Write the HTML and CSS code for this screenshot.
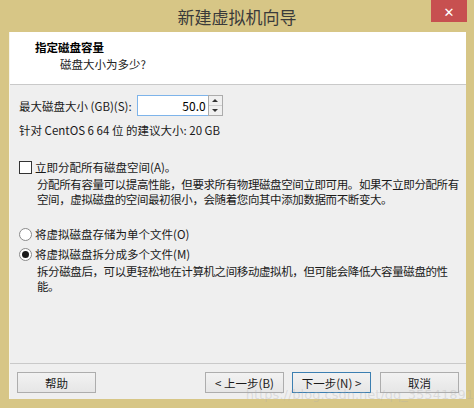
FILE: index.html
```html
<!DOCTYPE html>
<html lang="zh-CN">

<head>
    <meta charset="UTF-8">
    <meta name="viewport" content="width=device-width, initial-scale=1.0">
    <title>新建虚拟机向导</title>
    <link rel="stylesheet" href="styles.css">
</head>

<body>
    <div class="window">
        <div class="titlebar">
            <span class="title">新建虚拟机向导</span>
            <div class="close">&#x2715;</div>
        </div>

        <div class="client">
            <div class="header">
                <strong>指定磁盘容量</strong>
                <div class="subtitle">磁盘大小为多少?</div>
            </div>

            <div class="content">
                <div class="size-row">
                    <label for="disk-size">最大磁盘大小 (GB)(S):</label>
                    <div class="spin">
                        <input id="disk-size" type="text" value="50.0">
                        <div class="spin-buttons">
                            <span class="arrow up"></span>
                            <span class="arrow down"></span>
                        </div>
                    </div>
                </div>
                <div class="hint">针对 CentOS 6 64 位 的建议大小: 20 GB</div>

                <div class="option check-option">
                    <span class="checkbox"></span>
                    <span>立即分配所有磁盘空间(A)。</span>
                </div>
                <p class="note">分配所有容量可以提高性能，但要求所有物理磁盘空间立即可用。如果不立即分配所有<br>空间，虚拟磁盘的空间最初很小，会随着您向其中添加数据而不断变大。</p>

                <div class="option radio-first">
                    <span class="radio"></span>
                    <span>将虚拟磁盘存储为单个文件(O)</span>
                </div>
                <div class="option radio-second">
                    <span class="radio checked"></span>
                    <span>将虚拟磁盘拆分成多个文件(M)</span>
                </div>
                <p class="note">拆分磁盘后，可以更轻松地在计算机之间移动虚拟机，但可能会降低大容量磁盘的性<br>能。</p>
            </div>

            <div class="footer">
                <button class="btn">帮助</button>
                <div class="spacer"></div>
                <button class="btn">&lt; 上一步(B)</button>
                <button class="btn default">下一步(N) &gt;</button>
                <button class="btn">取消</button>
            </div>
        </div>

        <div class="watermark">https://blog.csdn.net/qq_35541891</div>
    </div>
</body>

</html>
```

FILE: styles.css
```css
* {
    box-sizing: border-box;
}

body {
    margin: 0;
    font-family: "Noto Sans CJK SC", "DejaVu Sans", sans-serif;
    font-size: 11.5px;
    color: #1a1a1a;
}

.window {
    position: relative;
    width: 474px;
    height: 408px;
    background: #d7c686;
    display: flex;
    flex-direction: column;
    overflow: hidden;
}

.titlebar {
    height: 32px;
    display: flex;
    align-items: center;
    justify-content: center;
}

.title {
    font-size: 17px;
    color: #3a3a3a;
    padding-top: 1px;
}

.close {
    position: absolute;
    top: 0;
    right: 7px;
    width: 36px;
    height: 22px;
    background: #c75050;
    color: #fff;
    font-size: 13px;
    font-weight: bold;
    display: flex;
    align-items: center;
    justify-content: center;
}

.client {
    flex: 1;
    margin: 0 8px 9px 9px;
    background: #efefef;
    border-left: 1px solid #f7f5ec;
    display: flex;
    flex-direction: column;
}

.header {
    height: 53px;
    background: #fff;
    border-bottom: 1px solid #c9c9c9;
    padding: 7px 0 0 25px;
    line-height: 17px;
}

.header strong {
    color: #000;
}

.subtitle {
    padding-left: 25px;
    color: #222;
}

.content {
    flex: 1;
    padding: 10px 0 0 9px;
}

.size-row {
    display: flex;
    align-items: center;
    height: 21px;
    gap: 5px;
}

.spin {
    display: flex;
    height: 21px;
}

.spin input {
    width: 71px;
    height: 21px;
    border: 1px solid #7eb4ea;
    border-right: none;
    font: inherit;
    font-size: 12px;
    text-align: right;
    padding: 0 2px 0 0;
    background: #fff;
    color: #000;
    outline: none;
}

.spin-buttons {
    width: 15px;
    border: 1px solid #acacac;
    display: flex;
    flex-direction: column;
    background: #f0f0f0;
}

.spin-buttons .arrow {
    flex: 1;
    display: flex;
    align-items: center;
    justify-content: center;
}

.spin-buttons .up {
    border-bottom: 1px solid #d0d0d0;
}

.arrow.up::before {
    content: "";
    border-left: 3px solid transparent;
    border-right: 3px solid transparent;
    border-bottom: 3px solid #333;
}

.arrow.down::before {
    content: "";
    border-left: 3px solid transparent;
    border-right: 3px solid transparent;
    border-top: 3px solid #333;
}

.hint {
    margin-top: 6px;
    line-height: 16px;
}

.option {
    display: flex;
    align-items: center;
    gap: 3px;
    line-height: 16px;
}

.check-option {
    margin-top: 21px;
}

.radio-first {
    margin-top: 19px;
}

.radio-second {
    margin-top: 4px;
}

.checkbox {
    width: 13px;
    height: 13px;
    border: 1px solid #333;
    background: #fff;
}

.radio {
    width: 13px;
    height: 13px;
    border: 1px solid #8a8a8a;
    border-radius: 50%;
    background: #fff;
    display: flex;
    align-items: center;
    justify-content: center;
}

.radio.checked::after {
    content: "";
    width: 7px;
    height: 7px;
    border-radius: 50%;
    background: #1a1a1a;
}

.note {
    margin: 2px 0 0 18px;
    line-height: 15px;
    white-space: nowrap;
    letter-spacing: -0.4px;
    color: #1a1a1a;
}

.footer {
    height: 36px;
    border-top: 1px solid #c9c9c9;
    display: flex;
    align-items: flex-start;
    padding: 8px 7px 0 7px;
    gap: 8px;
}

.spacer {
    flex: 1;
}

.btn {
    width: 79px;
    height: 21px;
    border: 1px solid #adadad;
    background: linear-gradient(#f2f2f2, #e6e6e6);
    font: inherit;
    color: #1a1a1a;
    padding: 0;
}

.btn.default {
    border-color: #3c7fb1;
    margin-right: 1px;
}

.watermark {
    position: absolute;
    right: 0;
    bottom: 6px;
    font-family: "DejaVu Sans", sans-serif;
    font-size: 13px;
    color: rgba(170, 170, 170, 0.3);
    pointer-events: none;
}
```
